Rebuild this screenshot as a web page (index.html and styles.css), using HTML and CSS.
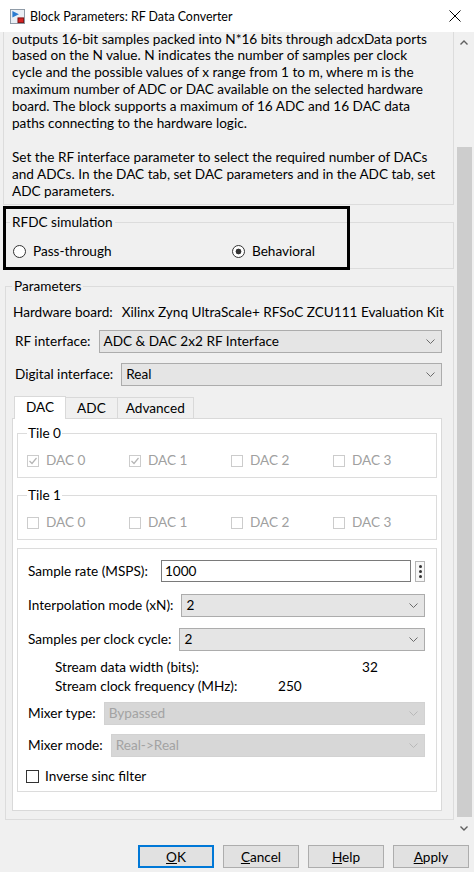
FILE: index.html
```html
<!DOCTYPE html>
<html lang="en">
<head>
    <meta charset="UTF-8">
    <meta name="viewport" content="width=device-width, initial-scale=1.0">
    <title>Block Parameters: RF Data Converter</title>
    <link rel="stylesheet" href="styles.css">
</head>
<body>

    <div class="dialog">
        <div class="titlebar">
            <svg class="app-icon" viewBox="0 0 16 16">
                <rect x="0.5" y="0.5" width="15" height="15" fill="#e9eef4" stroke="#8a96a3"/>
                <polygon points="2.5,2 9.5,5.5 2.5,9" fill="#2b7bd0"/>
                <rect x="8.5" y="9.5" width="6" height="5" fill="#d62222" stroke="#7a1010"/>
            </svg>
            <span class="title">Block Parameters: RF Data Converter</span>
            <svg class="close" viewBox="0 0 12 12">
                <path d="M0.5 0.5 L11.5 11.5 M11.5 0.5 L0.5 11.5" stroke="#000" stroke-width="1"/>
            </svg>
        </div>

        <div class="scroller">
            <div class="content">
                <div class="description">
                    <p><span class="first-line">outputs 16-bit samples packed into N*16 bits through adcxData ports</span>
                    based on the N value. N indicates the number of samples per clock<br>
                    cycle and the possible values of x range from 1 to m, where m is the<br>
                    maximum number of ADC or DAC available on the selected hardware<br>
                    board. The block supports a maximum of 16 ADC and 16 DAC data<br>
                    paths connecting to the hardware logic.</p>
                    <p>Set the RF interface parameter to select the required number of DACs<br>
                    and ADCs. In the DAC tab, set DAC parameters and in the ADC tab, set<br>
                    ADC parameters.</p>
                </div>

                <fieldset class="group sim-group">
                    <legend>RFDC simulation</legend>
                    <div class="radio-row">
                        <label class="radio"><span class="radio-mark"></span>Pass-through</label>
                        <label class="radio"><span class="radio-mark checked"></span>Behavioral</label>
                    </div>
                </fieldset>
                <div class="highlight"></div>

                <fieldset class="group params">
                    <legend>Parameters</legend>
                    <div class="hw-row">
                        <span>Hardware board:</span>
                        <span>Xilinx Zynq UltraScale+ RFSoC ZCU111 Evaluation Kit</span>
                    </div>
                    <div class="form-row top-row">
                        <span class="label">RF interface:</span>
                        <div class="select">
                            <span>ADC &amp; DAC 2x2 RF Interface</span>
                            <svg class="chevron" viewBox="0 0 9 5"><polyline points="0.5,0.5 4.5,4.5 8.5,0.5"/></svg>
                        </div>
                    </div>
                    <div class="form-row top-row">
                        <span class="label">Digital interface:</span>
                        <div class="select">
                            <span>Real</span>
                            <svg class="chevron" viewBox="0 0 9 5"><polyline points="0.5,0.5 4.5,4.5 8.5,0.5"/></svg>
                        </div>
                    </div>

                    <div class="tabs">
                        <div class="tab active">DAC</div>
                        <div class="tab">ADC</div>
                        <div class="tab">Advanced</div>
                    </div>
                    <div class="tab-panel">
                        <fieldset class="group tile">
                            <legend>Tile 0</legend>
                            <div class="check-grid">
                                <label class="check disabled"><span class="check-box"><svg viewBox="0 0 10 10"><polyline points="1.5,5 4,7.5 8.5,2"/></svg></span>DAC 0</label>
                                <label class="check disabled"><span class="check-box"><svg viewBox="0 0 10 10"><polyline points="1.5,5 4,7.5 8.5,2"/></svg></span>DAC 1</label>
                                <label class="check disabled"><span class="check-box"></span>DAC 2</label>
                                <label class="check disabled"><span class="check-box"></span>DAC 3</label>
                            </div>
                        </fieldset>
                        <fieldset class="group tile">
                            <legend>Tile 1</legend>
                            <div class="check-grid">
                                <label class="check disabled"><span class="check-box"></span>DAC 0</label>
                                <label class="check disabled"><span class="check-box"></span>DAC 1</label>
                                <label class="check disabled"><span class="check-box"></span>DAC 2</label>
                                <label class="check disabled"><span class="check-box"></span>DAC 3</label>
                            </div>
                        </fieldset>

                        <div class="settings">
                            <div class="form-row sample-row">
                                <span class="label">Sample rate (MSPS):</span>
                                <div class="text-input">1000</div>
                                <div class="dots"><i></i><i></i><i></i></div>
                            </div>
                            <div class="form-row interp-row">
                                <span class="label">Interpolation mode (xN):</span>
                                <div class="select">
                                    <span>2</span>
                                    <svg class="chevron" viewBox="0 0 9 5"><polyline points="0.5,0.5 4.5,4.5 8.5,0.5"/></svg>
                                </div>
                            </div>
                            <div class="form-row">
                                <span class="label">Samples per clock cycle:</span>
                                <div class="select">
                                    <span>2</span>
                                    <svg class="chevron" viewBox="0 0 9 5"><polyline points="0.5,0.5 4.5,4.5 8.5,0.5"/></svg>
                                </div>
                            </div>
                            <div class="stream">
                                <div class="stream-line"><span class="key key-data">Stream data width (bits):</span>32</div>
                                <div class="stream-line"><span class="key key-clock">Stream clock frequency (MHz):</span>250</div>
                            </div>
                            <div class="form-row mixer-row">
                                <span class="label">Mixer type:</span>
                                <div class="select disabled">
                                    <span>Bypassed</span>
                                    <svg class="chevron" viewBox="0 0 9 5"><polyline points="0.5,0.5 4.5,4.5 8.5,0.5"/></svg>
                                </div>
                            </div>
                            <div class="form-row">
                                <span class="label">Mixer mode:</span>
                                <div class="select disabled">
                                    <span>Real-&gt;Real</span>
                                    <svg class="chevron" viewBox="0 0 9 5"><polyline points="0.5,0.5 4.5,4.5 8.5,0.5"/></svg>
                                </div>
                            </div>
                            <label class="check sinc"><span class="check-box"></span>Inverse sinc filter</label>
                        </div>
                    </div>
                </fieldset>
            </div>

            <div class="scrollbar">
                <div class="sb-arrow">
                    <svg viewBox="0 0 8 5"><polyline points="0.5,4.5 4,1 7.5,4.5"/></svg>
                </div>
                <div class="sb-track"><div class="sb-thumb"></div></div>
                <div class="sb-arrow">
                    <svg viewBox="0 0 8 5"><polyline points="0.5,0.5 4,4 7.5,0.5"/></svg>
                </div>
            </div>
        </div>

        <div class="buttons">
            <button class="btn default"><u>O</u>K</button>
            <button class="btn"><u>C</u>ancel</button>
            <button class="btn"><u>H</u>elp</button>
            <button class="btn"><u>A</u>pply</button>
        </div>
    </div>

</body>
</html>
```

FILE: styles.css
```css
* {
    box-sizing: border-box;
}

body {
    margin: 0;
    font-family: Lato, "Liberation Sans", sans-serif;
    font-size: 13.6px;
    line-height: 17px;
    color: #000;
    background-color: #fff;
}

.dialog {
    width: 474px;
    height: 872px;
    background-color: #f0f0f0;
    display: flex;
    flex-direction: column;
    overflow: hidden;
    white-space: nowrap;
}

/* title bar */

.titlebar {
    height: 32px;
    flex: none;
    background-color: #fff;
    display: flex;
    align-items: center;
    padding: 0 13px 0 10px;
}

.app-icon {
    width: 15px;
    height: 15px;
    margin-right: 5px;
}

.title {
    flex: 1;
    font-size: 12.4px;
}

.close {
    width: 12px;
    height: 12px;
}

/* scrolling area */

.scroller {
    height: 806px;
    flex: none;
    display: flex;
}

.content {
    width: 457px;
    overflow: hidden;
    position: relative;
}

.description {
    margin: 0 3px;
    padding: 0 8px 4px 8px;
    border: 1px solid #dcdcdc;
    border-top: none;
}

.description p {
    margin: 0 0 17px 0;
}

.description p:last-child {
    margin-bottom: 0;
}

.first-line {
    display: block;
    line-height: 15px;
}

.group {
    margin: 0 3px 0 5px;
    border: 1px solid #dcdcdc;
    min-width: 0;
}

.group legend {
    padding: 0 2px;
    line-height: 17px;
}

.sim-group {
    margin-top: 9px;
    padding: 12px 6px 8px 6px;
}

.sim-group legend {
    margin-left: -2px;
}

.highlight {
    position: absolute;
    left: 3px;
    top: 174px;
    width: 347px;
    height: 64px;
    border: 3px solid #000;
}

.radio-row {
    display: grid;
    grid-template-columns: 219px 1fr;
    padding-left: 1px;
}

.radio {
    display: flex;
    align-items: center;
    gap: 7px;
}

.radio-mark {
    width: 13px;
    height: 13px;
    border: 1px solid #333;
    border-radius: 50%;
    background-color: #fff;
}

.radio-mark.checked {
    background: radial-gradient(circle, #333 0 2.6px, #fff 3.2px);
}

.params {
    margin-top: 9px;
    padding: 9px 11px 8px 6px;
}

.hw-row {
    display: flex;
    gap: 9px;
    padding-left: 1px;
}

.form-row {
    display: flex;
    align-items: center;
    gap: 8px;
    height: 23px;
}

.top-row {
    margin-top: 10px;
    padding-left: 3px;
}

.hw-row + .top-row {
    margin-top: 9px;
}

.select {
    flex: 1;
    height: 23px;
    display: flex;
    align-items: center;
    justify-content: space-between;
    padding: 0 6px 0 4px;
    background-color: #e5e5e5;
    border: 1px solid #acacac;
}

.select.disabled {
    background-color: #d7d7d7;
    border-color: #d2d2d2;
    color: #a3a3a3;
}

.chevron {
    width: 9px;
    height: 5px;
    fill: none;
    stroke: #6b6b6b;
}

.select.disabled .chevron {
    stroke: #b8b8b8;
}

/* tabs */

.tabs {
    display: flex;
    margin: 10px 0 0 2px;
    height: 22px;
    align-items: flex-end;
}

.tab {
    height: 21px;
    padding: 0 11px;
    line-height: 20px;
    border: 1px solid #d9d9d9;
    border-bottom: none;
    margin-right: -1px;
    background-color: #f0f0f0;
}

.tab:last-child {
    padding: 0 8px;
}

.tab.active {
    height: 23px;
    margin-bottom: -1px;
    background-color: #fff;
    position: relative;
    z-index: 1;
}

.tab-panel {
    background-color: #fff;
    border: 1px solid #d9d9d9;
    padding: 6px 4px 18px 4px;
}

.tile {
    margin: 0;
    padding: 10px 9px 8px 9px;
}

.tile + .tile {
    margin-top: 9px;
}

.tile legend {
    padding: 0 1px;
}

.check-grid {
    display: grid;
    grid-template-columns: repeat(4, 102px);
}

.check {
    display: flex;
    align-items: center;
    gap: 7px;
}

.check-box {
    width: 12px;
    height: 12px;
    border: 1px solid #333;
    background-color: #fff;
    display: flex;
}

.check-box svg {
    width: 10px;
    height: 10px;
    fill: none;
    stroke: #b5b5b5;
    stroke-width: 1.2;
}

.check.disabled {
    color: #a0a0a0;
}

.check.disabled .check-box {
    border-color: #cccccc;
}

/* settings panel */

.settings {
    margin-top: 8px;
    border: 1px solid #dcdcdc;
    padding: 11px 11px 6px 10px;
}

.sample-row {
    height: 22px;
}

.sample-row .label {
    margin-right: 5px;
}

.text-input {
    flex: 1;
    height: 22px;
    border: 1px solid #7a7a7a;
    background-color: #fff;
    padding: 0 3px;
    line-height: 20px;
}

.dots {
    width: 10px;
    height: 21px;
    margin-left: -4px;
    border: 1px solid #b5b5b5;
    background-color: #f7f7f7;
    display: flex;
    flex-direction: column;
    align-items: center;
    justify-content: center;
    gap: 2px;
}

.dots i {
    width: 3px;
    height: 3px;
    border-radius: 50%;
    background-color: #333;
}

.interp-row {
    margin-top: 12px;
}

.interp-row + .form-row {
    margin-top: 11px;
}

.stream {
    margin-top: 7px;
    padding-left: 27px;
    line-height: 19px;
}

.key {
    display: inline-block;
}

.key-data {
    width: 307px;
}

.key-clock {
    width: 223px;
}

.mixer-row {
    margin-top: 6px;
}

.mixer-row + .form-row {
    margin-top: 9px;
}

.sinc {
    margin: 11px 0 0 -2px;
    gap: 6px;
}

.sinc .check-box {
    width: 13px;
    height: 13px;
}

/* scrollbar */

.scrollbar {
    width: 17px;
    display: flex;
    flex-direction: column;
}

.sb-arrow {
    height: 20px;
    display: flex;
    align-items: center;
    justify-content: center;
    padding-right: 3px;
}

.sb-arrow svg {
    width: 8px;
    height: 5px;
    fill: none;
    stroke: #606060;
    stroke-width: 1.4;
}

.sb-track {
    flex: 1;
    display: flex;
    flex-direction: column;
    padding: 95px 2px 1px 0;
}

.sb-thumb {
    flex: 1;
    background-color: #cdcdcd;
}

/* dialog buttons */

.buttons {
    flex: 1;
    display: flex;
    justify-content: flex-end;
    align-items: flex-start;
    gap: 9px;
    padding: 7px 5px 0 0;
}

.btn {
    width: 76px;
    height: 23px;
    font-family: inherit;
    font-size: 13.6px;
    padding: 0;
    background-color: #e1e1e1;
    border: 1px solid #adadad;
    color: #000;
}

.btn.default {
    border: 2px solid #0078d7;
}
```
